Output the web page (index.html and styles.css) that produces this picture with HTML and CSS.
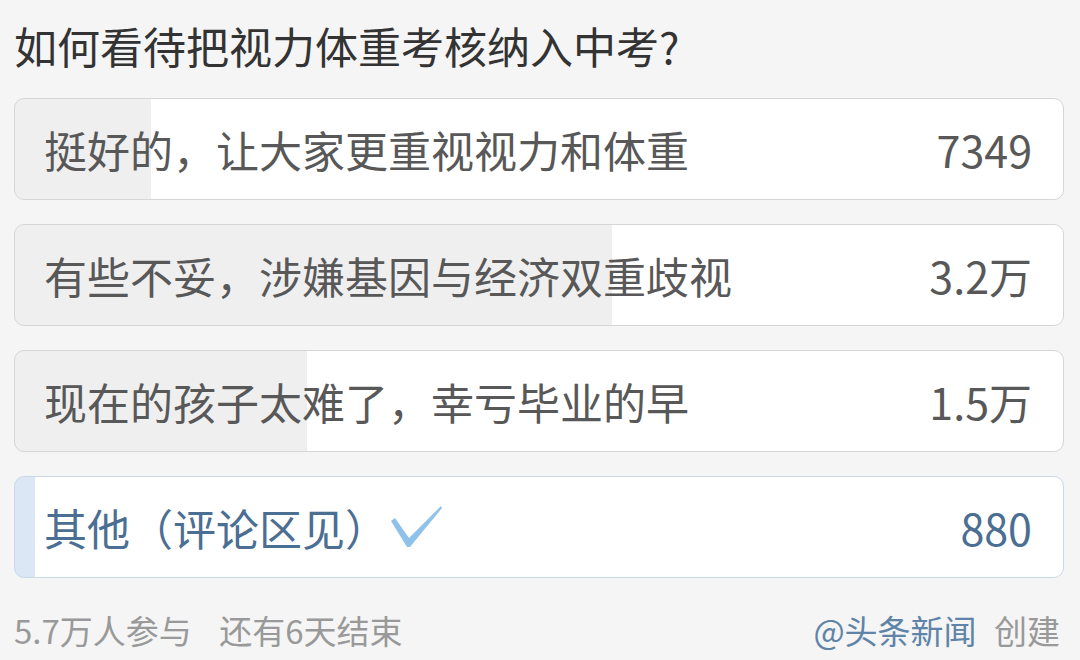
FILE: index.html
```html
<!DOCTYPE html>
<html lang="zh-CN">
<head>
    <meta charset="UTF-8">
    <meta name="viewport" content="width=device-width, initial-scale=1.0">
    <title>投票</title>
    <link rel="stylesheet" href="styles.css">
</head>
<body>

<div class="poll">
    <h1 class="poll-title">如何看待把视力体重考核纳入中考?</h1>

    <div class="option" style="--fill: 13%">
        <span class="option-label">挺好的，让大家更重视视力和体重</span>
        <span class="option-count">7349</span>
    </div>

    <div class="option" style="--fill: 57%">
        <span class="option-label">有些不妥，涉嫌基因与经济双重歧视</span>
        <span class="option-count">3.2万</span>
    </div>

    <div class="option" style="--fill: 27.9%">
        <span class="option-label">现在的孩子太难了，幸亏毕业的早</span>
        <span class="option-count">1.5万</span>
    </div>

    <div class="option option-chosen" style="--fill: 1.9%">
        <span class="option-label">其他（评论区见）</span>
        <!-- tick: short left arm, long right arm, heavier at the joint -->
        <svg class="check" width="54" height="46" viewBox="0 0 54 46">
            <path d="M1 17 L5 14 L19 34 L51 2 L52 4 L20 43 L17 43 Z" fill="#8ec2ea"/>
        </svg>
        <span class="option-count">880</span>
    </div>

    <div class="poll-footer">
        <div class="stats">
            <span>5.7万人参与</span>
            <span>还有6天结束</span>
        </div>
        <div class="creator">
            <span class="creator-name">@头条新闻</span>
            <span>创建</span>
        </div>
    </div>
</div>

</body>
</html>
```

FILE: styles.css
```css
body {
    margin: 0;
    background-color: #f5f5f5;
    font-family: "Noto Sans CJK SC", "Noto Sans", sans-serif;
}

.poll {
    padding: 0 16px 0 14px;
}

.poll-title {
    margin: 0 0 8px 0;
    height: 90px;
    line-height: 90px;
    font-size: 43px;
    font-weight: normal;
    color: #333;
}

.option {
    display: flex;
    align-items: center;
    height: 100px;
    margin-bottom: 24px;
    padding: 0 31px 0 29px;
    border: 1px solid #d6d6d6;
    border-radius: 10px;
    background: linear-gradient(to right, #efefef var(--fill), #ffffff var(--fill));
    color: #585858;
    font-size: 43px;
}

.option-label {
    flex: 1;
    white-space: nowrap;
}

.option-count {
    font-size: 43px;
}

.option-chosen {
    border-color: #c9d9ea;
    background: linear-gradient(to right, #dbe7f4 var(--fill), #ffffff var(--fill));
    color: #4b6e93;
}

.option-chosen .option-label {
    flex: none;
}

.check {
    margin: 0 auto 0 2px;
}

.poll-footer {
    display: flex;
    justify-content: space-between;
    align-items: center;
    height: 60px;
    margin-top: -2px;
    font-size: 33px;
    color: #999;
}

.stats span + span {
    margin-left: 20px;
}

.creator {
    margin-right: 4px;
}

.creator-name {
    color: #5f84a8;
    margin-right: 10px;
}
```
